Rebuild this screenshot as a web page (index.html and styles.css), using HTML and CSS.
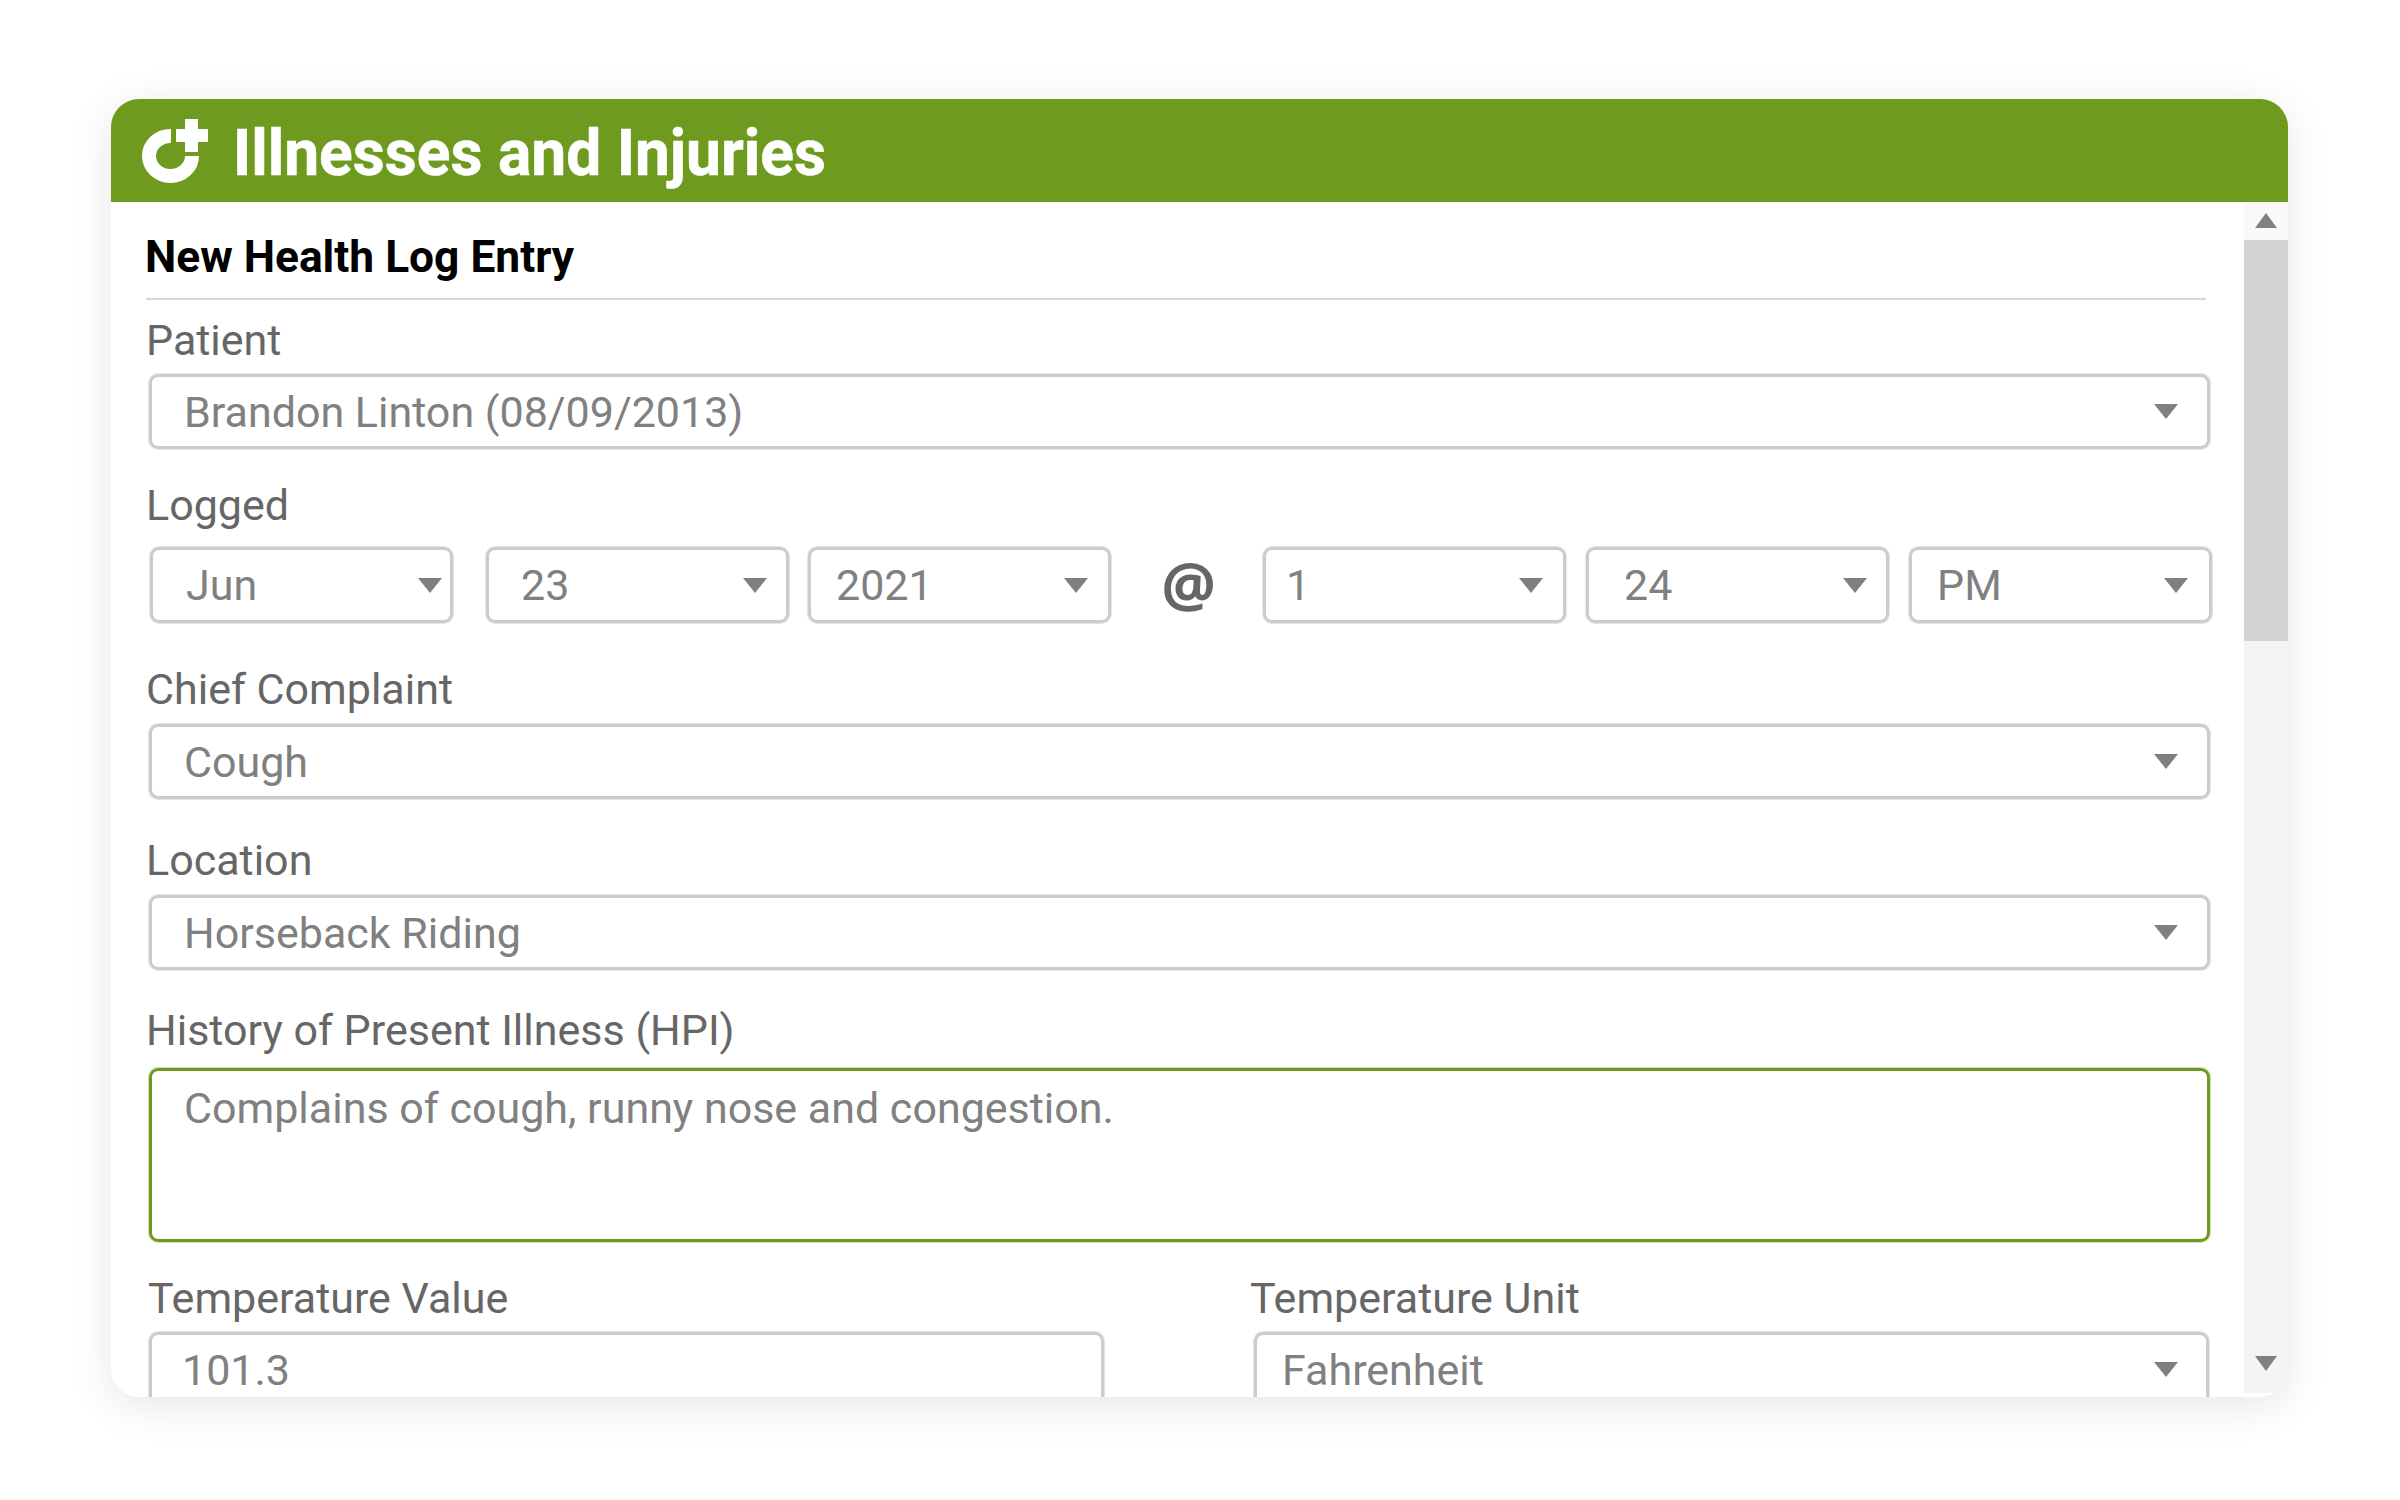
FILE: index.html
```html
<!DOCTYPE html>
<html lang="en">
<head>
  <meta charset="UTF-8">
  <title>Illnesses and Injuries</title>
  <link rel="stylesheet" href="styles.css">
</head>
<body>

  <div class="card">
    <div class="card-head">
      <svg class="head-icon" viewBox="141 117 68 65">
        <path d="M171 135A21.500 20 0 1 0 192 155" fill="none" stroke="#fff" stroke-width="14"/>
        <path d="M185 118h13v10h10v13h-10v10h-13v-10h-9v-13h9z" fill="#fff"/>
      </svg>
      <h1>Illnesses and Injuries</h1>
    </div>

    <div class="card-body">
      <div class="form">
        <h2 class="form-title">New Health Log Entry</h2>

        <div class="label first">Patient</div>
        <div class="control"><span>Brandon Linton (08/09/2013)</span><i class="caret"></i></div>

        <div class="label logged">Logged</div>
        <div class="date-row">
          <div class="control month"><span>Jun</span><i class="caret"></i></div>
          <div class="control day"><span>23</span><i class="caret"></i></div>
          <div class="control year"><span>2021</span><i class="caret"></i></div>
          <div class="at">@</div>
          <div class="control hour"><span>1</span><i class="caret"></i></div>
          <div class="control minute"><span>24</span><i class="caret"></i></div>
          <div class="control ampm"><span>PM</span><i class="caret"></i></div>
        </div>

        <div class="label complaint">Chief Complaint</div>
        <div class="control"><span>Cough</span><i class="caret"></i></div>

        <div class="label location">Location</div>
        <div class="control"><span>Horseback Riding</span><i class="caret"></i></div>

        <div class="label hpi">History of Present Illness (HPI)</div>
        <div class="control textarea"><span>Complains of cough, runny nose and congestion.</span></div>

        <div class="temp-row">
          <div class="temp-col">
            <div class="label temp">Temperature Value</div>
            <div class="control"><span>101.3</span></div>
          </div>
          <div class="temp-col unit">
            <div class="label temp">Temperature Unit</div>
            <div class="control"><span>Fahrenheit</span><i class="caret"></i></div>
          </div>
        </div>
      </div>

      <div class="scrollbar">
        <div class="scroll-btn"><i class="arrow-up"></i></div>
        <div class="scroll-thumb"></div>
        <div class="scroll-rest"><i class="caret"></i></div>
      </div>
    </div>
  </div>

</body>
</html>
```

FILE: styles.css
```css
body {
  margin: 0;
  background: #fff;
  font-family: Roboto, sans-serif;
  padding: 99px 0 0 111px;
  height: 1401px;
  overflow: hidden;
}

.card {
  width: 2177px;
  height: 1298px;
  border-radius: 28px;
  background: #fff;
  box-shadow: 0 8px 44px rgba(0,0,0,0.1);
  overflow: hidden;
  display: flex;
  flex-direction: column;
}

.card-head {
  height: 103px;
  flex: none;
  background: #6e9a1f;
  display: flex;
  align-items: center;
  padding-left: 30px;
}

.head-icon {
  width: 68px;
  height: 65px;
  margin: 0 24px 0 0;
}

h1 {
  margin: 5px 0 0;
  color: #fff;
  font-size: 62.300px;
  font-weight: 700;
  line-height: 1;
  transform: scaleY(1.05);
  -webkit-text-stroke: 0.6px #fff;
}

.card-body {
  flex: 1;
  min-height: 0;
  display: flex;
}

.form {
  flex: 1;
  min-width: 0;
  overflow: hidden;
  padding-left: 35px;
}

.form-title {
  margin: 30px 38px 0 0;
  padding-bottom: 16px;
  border-bottom: 2px solid #d8d8d8;
  color: #000;
  font-size: 44.300px;
  font-weight: 700;
  line-height: 50px;
  text-indent: -1px;
}

.label {
  color: #666;
  font-size: 43px;
  line-height: 46px;
}

.label.first { margin: 17px 0 11px; }
.label.logged { margin: 33px 0 19px; }
.label.complaint { margin: 43px 0 12px; }
.label.location { margin: 38px 0 12px; }
.label.hpi { margin: 37px 0 15px; }
.label.temp { margin: 33px 0 11px; }

.control {
  box-sizing: border-box;
  width: 2061px;
  height: 75px;
  margin-left: 3px;
  padding: 0 29px 0 32px;
  border: 3px solid #ccc;
  border-radius: 9px;
  box-shadow: 0 0 0 1px rgba(204,204,204,0.5);
  display: flex;
  align-items: center;
  justify-content: space-between;
  color: #808080;
  font-size: 43px;
}

.caret {
  width: 0;
  height: 0;
  border-left: 12px solid transparent;
  border-right: 12px solid transparent;
  border-top: 15px solid #808080;
}

.date-row {
  display: flex;
  align-items: center;
  margin-left: 4px;
}

.date-row .control {
  width: 303px;
  height: 76px;
  margin: 0;
  padding: 0 20px 0 33px;
}

.date-row .month { padding-right: 8px; }
.date-row .day { margin-left: 33px; padding-left: 32px; padding-right: 19px; }
.date-row .year { margin-left: 19px; padding-left: 25px; }
.date-row .hour { padding-left: 20px; }
.date-row .minute { margin-left: 20px; padding-left: 35px; padding-right: 19px; }
.date-row .ampm { margin-left: 20px; padding-left: 25px; padding-right: 21px; }

.at {
  width: 152px;
  margin-top: -2px;
  padding-left: 3px;
  box-sizing: border-box;
  text-align: center;
  color: #666;
  font-family: "Open Sans", sans-serif;
  font-size: 61px;
  font-weight: 700;
  line-height: 60px;
}

.control.textarea {
  height: 174px;
  padding-top: 12px;
  align-items: flex-start;
  border-color: #6e9a1f;
  box-shadow: 0 0 0 1px rgba(110,154,31,0.3);
}

.temp-row {
  display: flex;
}

.temp-col .control {
  width: 955px;
  padding-left: 30px;
  border-bottom-left-radius: 0;
  border-bottom-right-radius: 0;
}

.temp-col.unit {
  margin-left: 146px;
}

.temp-col.unit .control {
  margin-left: 4px;
  padding-left: 25px;
  padding-right: 28px;
}

.temp-col .label {
  margin-left: 2px;
}

.temp-col.unit .label {
  margin-left: 0;
}

.scrollbar {
  flex: none;
  width: 44px;
  height: 1191px;
  display: flex;
  flex-direction: column;
  background: #f4f4f4;
}

.scroll-btn {
  height: 38px;
  background: #f9f9f9;
  display: flex;
  justify-content: center;
  padding-top: 11px;
  box-sizing: border-box;
}

.arrow-up {
  width: 0;
  height: 0;
  border-left: 11px solid transparent;
  border-right: 11px solid transparent;
  border-bottom: 15px solid #808080;
}

.scroll-thumb {
  height: 401px;
  background: #d3d3d3;
}

.scroll-rest {
  flex: 1;
  display: flex;
  justify-content: center;
  align-items: flex-end;
  padding-bottom: 22px;
}

.scroll-rest .caret {
  border-left-width: 11px;
  border-right-width: 11px;
}
```
